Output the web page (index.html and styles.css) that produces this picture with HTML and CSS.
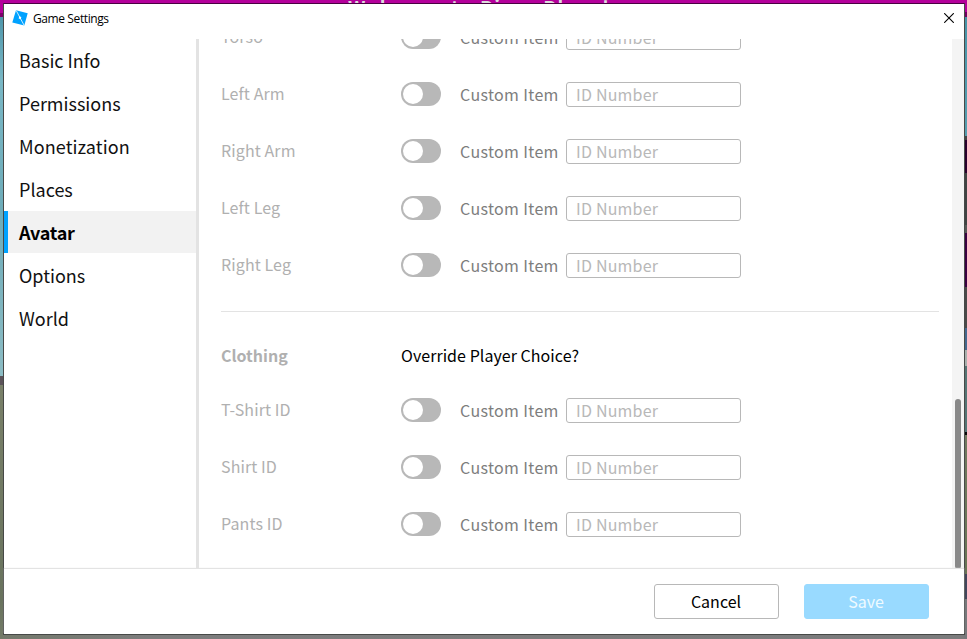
FILE: index.html
```html
<!DOCTYPE html>
<html lang="en">
<head>
    <meta charset="UTF-8">
    <title>Game Settings</title>
    <link rel="stylesheet" href="styles.css">
</head>
<body>
    <div class="edge edge-left"></div>
    <div class="edge edge-right"></div>
    <div class="banner"><span>Welcome to Pizza Place!</span></div>

    <div class="window">
        <header class="titlebar">
            <svg class="logo" width="16" height="16" viewBox="0 0 16 16">
                <path fill="#00a2ff" d="M4 0.2 L15.7 3.3 L12.3 15.6 L0.3 12.5 Z"/>
                <path stroke="#fff" stroke-width="0.8" d="M4.2 0.5 L12.1 15.3"/>
                <path fill="#fff" d="M7.3 6.3 L9.3 6.9 L8.7 9.2 L6.7 8.6 Z"/>
            </svg>
            <span class="title">Game Settings</span>
            <svg class="close" width="10" height="10" viewBox="0 0 10 10">
                <path stroke="#000" stroke-width="1.1" d="M0.2 0.2 L9.8 9.8 M9.8 0.2 L0.2 9.8"/>
            </svg>
        </header>

        <div class="main">
            <nav class="menu">
                <a class="menu-item"><span>Basic Info</span></a>
                <a class="menu-item"><span>Permissions</span></a>
                <a class="menu-item wide"><span>Monetization</span></a>
                <a class="menu-item"><span>Places</span></a>
                <a class="menu-item is-active"><span>Avatar</span></a>
                <a class="menu-item"><span>Options</span></a>
                <a class="menu-item"><span>World</span></a>
            </nav>

            <section class="content">
                <div class="rows">
                    <div class="row">
                        <span class="label">Torso</span><span class="toggle"></span>
                        <span class="custom">Custom Item</span><span class="field">ID Number</span>
                    </div>
                    <div class="row">
                        <span class="label">Left Arm</span><span class="toggle"></span>
                        <span class="custom">Custom Item</span><span class="field">ID Number</span>
                    </div>
                    <div class="row">
                        <span class="label">Right Arm</span><span class="toggle"></span>
                        <span class="custom">Custom Item</span><span class="field">ID Number</span>
                    </div>
                    <div class="row">
                        <span class="label">Left Leg</span><span class="toggle"></span>
                        <span class="custom">Custom Item</span><span class="field">ID Number</span>
                    </div>
                    <div class="row">
                        <span class="label">Right Leg</span><span class="toggle"></span>
                        <span class="custom">Custom Item</span><span class="field">ID Number</span>
                    </div>
                </div>
                <hr>
                <div class="section-head">
                    <span class="label">Clothing</span>
                    <span class="question">Override Player Choice?</span>
                </div>
                <div class="rows">
                    <div class="row">
                        <span class="label">T-Shirt ID</span><span class="toggle"></span>
                        <span class="custom">Custom Item</span><span class="field">ID Number</span>
                    </div>
                    <div class="row">
                        <span class="label">Shirt ID</span><span class="toggle"></span>
                        <span class="custom">Custom Item</span><span class="field">ID Number</span>
                    </div>
                    <div class="row">
                        <span class="label">Pants ID</span><span class="toggle"></span>
                        <span class="custom">Custom Item</span><span class="field">ID Number</span>
                    </div>
                </div>
            </section>

            <div class="scrollbar"><div class="thumb"></div></div>
        </div>

        <footer class="footer">
            <span class="button cancel">Cancel</span>
            <span class="button save">Save</span>
        </footer>
    </div>
</body>
</html>
```
FILE: styles.css
```css
* {
    box-sizing: border-box;
}

body {
    margin: 0;
    height: 639px;
    padding: 3px 2px 4px 3px;
    overflow: hidden;
    position: relative;
    background: linear-gradient(90deg, #74796b, #7d7d7d 15%, #7b7b7c);
    font-family: "Noto Sans CJK SC", "Open Sans", sans-serif;
    font-size: 16px;
}

/* what shows of the game behind the window */
.edge {
    position: absolute;
    top: 0;
    bottom: 0;
    width: 3px;
}

.edge-left {
    left: 0;
    background: linear-gradient(#b4009b 0 13px, #7c0069 13px 17px, #4f97ab 17px, #79b7c5 80px, #6eacb9 210px, #8cbcc4 376px, #5b535a 376px 385px, #798069 385px, #69735e 600px, #747b68);
}

.edge-right {
    right: 0;
    background: linear-gradient(#b4009b 0 12px, #700061 12px 17px, #4794a8 17px, #579eaf 136px, #434545 136px 140px, #29002b 140px 173px, #3f4342 173px 225px, #555756 225px 233px, #390040 233px 287px, #494949 287px 328px, #45688e 328px 350px, #a9b0ad 350px 366px, #557575 366px 432px, #080808 432px 435px, #71795f 435px, #697455 574px, #42455b 574px 599px, #77787b 599px);
}

.banner {
    position: absolute;
    top: 0;
    left: 0;
    width: 967px;
    height: 4px;
    overflow: hidden;
    background: #b4009b;
    color: #ddd;
    font-size: 19px;
    font-weight: bold;
    line-height: 14px;
    letter-spacing: 1.7px;
}

.banner span {
    display: block;
    padding-left: 348px;
}

.window {
    position: relative;
    display: flex;
    flex-direction: column;
    width: 962px;
    height: 632px;
    border: 1px solid #474947;
    border-top-color: #4a0042;
    background: #fff;
}

.titlebar {
    display: flex;
    flex: none;
    height: 35px;
    padding: 6px 10px 0 8px;
}

.title {
    flex: 1;
    margin: -1px 0 0 5px;
    font: 12px/20px "Open Sans", "Noto Sans", sans-serif;
    letter-spacing: -0.4px;
}

.close {
    margin-top: 3px;
}

.main {
    display: flex;
    height: 530px;
    overflow: hidden;
}

.menu {
    flex: none;
    width: 195px;
    border-right: 3px solid #e3e3e3;
}

.menu-item {
    display: block;
    height: 42px;
    margin-bottom: 1px;
    padding-left: 15px;
    font-size: 18px;
    line-height: 43px;
    color: #111;
}

.menu-item.wide {
    letter-spacing: 0.1px;
}

.menu-item.is-active {
    padding-left: 11px;
    border-left: 4px solid #00a2ff;
    background: #f2f2f2;
    color: #000;
    font-weight: bold;
    letter-spacing: -0.25px;
}

.content {
    flex: 1;
    margin-top: -30px;
    padding: 0 13px 0 22px;
}

.row {
    display: flex;
    height: 57px;
    padding-top: 16px;
    line-height: 22px;
}

.label {
    width: 180px;
    color: #b0b0b0;
    letter-spacing: 0.1px;
}

.toggle {
    width: 40px;
    height: 24px;
    padding: 2px;
    border-radius: 12px;
    background: #b8b8b8;
}

.toggle::before {
    content: "";
    display: block;
    width: 20px;
    height: 20px;
    border-radius: 50%;
    background: #fff;
}

.custom {
    width: 106px;
    margin-left: 19px;
    line-height: 24px;
    letter-spacing: 0.35px;
    color: #7d7d7d;
    white-space: nowrap;
}

.field {
    width: 175px;
    height: 25px;
    padding-left: 9px;
    border: 1px solid #b8b8b8;
    border-radius: 3px;
    line-height: 22px;
    letter-spacing: 0.2px;
    color: #b8b8b8;
}

hr {
    height: 1px;
    margin: 17px 0 0;
    border: 0;
    background: #e3e3e3;
}

.section-head {
    display: flex;
    height: 70px;
    padding-top: 31px;
    line-height: 24px;
}

.section-head .label {
    font-weight: bold;
    letter-spacing: 0;
}

.question {
    color: #000;
    letter-spacing: 0.05px;
}

.scrollbar {
    flex: none;
    width: 12px;
    padding: 360px 3px 0;
    background: #f4f4f4;
}

.thumb {
    height: 170px;
    border-radius: 3px;
    background: #898989;
}

.footer {
    display: flex;
    flex: 1;
    justify-content: flex-end;
    gap: 25px;
    padding: 15px 35px 0 0;
    box-shadow: 0 -1px 1px #e3e3e3;
    position: relative;
}

.button {
    width: 125px;
    height: 35px;
    padding-right: 1px;
    border: 1px solid #b8b8b8;
    border-radius: 3px;
    line-height: 32px;
    text-align: center;
}

.save {
    border-color: #99daff;
    background: #99daff;
    color: #f0faff;
}
```
